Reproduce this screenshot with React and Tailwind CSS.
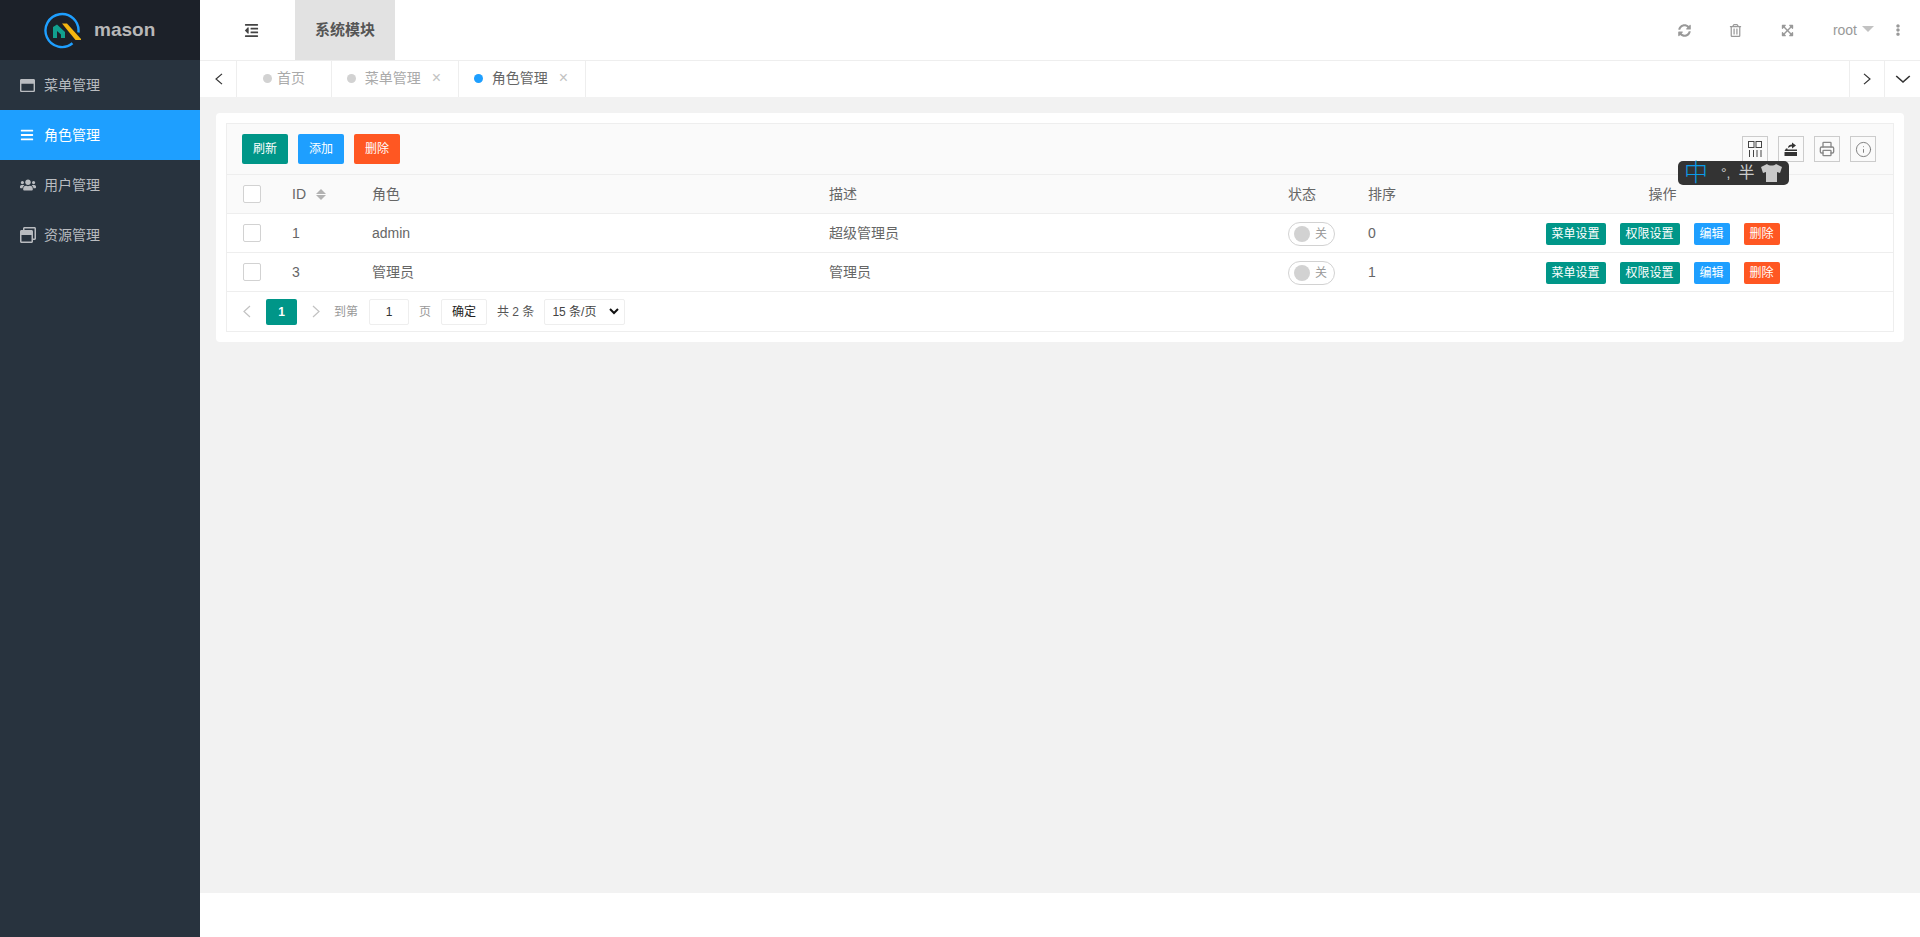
import { FaBars, FaExpandArrowsAlt, FaOutdent, FaRegTrashAlt, FaRegWindowMaximize, FaRegWindowRestore, FaEllipsisV, FaSyncAlt, FaUsers } from 'react-icons/fa'
import { Info, Printer } from 'lucide-react'

const fuente = { fontFamily: '"Liberation Sans", "Noto Sans CJK SC", sans-serif' }

const menu = [
  { nombre: '菜单管理', Icono: FaRegWindowMaximize, tam: 15 },
  { nombre: '角色管理', Icono: FaBars, tam: 14 },
  { nombre: '用户管理', Icono: FaUsers, tam: 16 },
  { nombre: '资源管理', Icono: FaRegWindowRestore, tam: 16 },
]

const filas = [
  { id: 1, rol: 'admin', desc: '超级管理员', orden: 0 },
  { id: 3, rol: '管理员', desc: '管理员', orden: 1 },
]

const columnas = 'grid grid-cols-[50px_80px_457px_459px_80px_79px_1fr] items-center'

function Chevron({ dir = 'left', className = '', alto = 12 }) {
  const puntos = {
    left: '7,1 1,6.5 7,12',
    right: '1,1 7,6.5 1,12',
  }
  return (
    <svg width="8" height={alto} viewBox="0 0 8 13" preserveAspectRatio="none" className={className} fill="none" stroke="currentColor" strokeWidth="1.2">
      <polyline points={puntos[dir]} />
    </svg>
  )
}

function Logo() {
  return (
    <svg width="38" height="38" viewBox="0 0 38 38">
      <path d="M29.5 32.3 A16.5 16.5 0 1 1 35.4 21.5" fill="none" stroke="#1e9fff" strokeWidth="2.4" />
      <path d="M10 27 L10 16 L14 13.5 L22 21 L22 27 L18 27 L18 23.5 L14 20 L14 27 Z" fill="#11a08f" />
      <path d="M19 12.5 L24 12.5 L38 28 L38 29 L32.5 29 Z" fill="#f5b60f" />
    </svg>
  )
}

function Sidebar() {
  return (
    <aside className="w-[200px] shrink-0 bg-[#28333e] flex flex-col">
      <div className="h-[60px] bg-[#1c2129] flex items-center pl-[43px] gap-[13px]">
        <Logo />
        <span className="text-[19px] font-bold text-[#b8b8b8]">mason</span>
      </div>
      {menu.map(({ nombre, Icono, tam }, i) => (
        <div
          key={nombre}
          className={`h-[50px] flex items-center pl-5 text-sm ${i === 1 ? 'bg-[#1e9fff] text-white' : 'text-[#b9bcc0]'}`}
        >
          <span className="w-[24px] flex items-center">
            <Icono size={tam} />
          </span>
          {nombre}
        </div>
      ))}
    </aside>
  )
}

function Topbar() {
  return (
    <header className="h-[60px] shrink-0 bg-white flex items-center">
      <div className="w-[95px] pl-[7px] flex justify-center text-[#444]">
        <FaOutdent size={15} />
      </div>
      <div className="w-[100px] h-full bg-[#e2e2e2] flex items-center justify-center text-[15px] font-bold text-[#555]">
        系统模块
      </div>
      <div className="ml-auto flex items-center text-[#999]">
        <FaSyncAlt size={13} className="mr-[38px]" />
        <FaRegTrashAlt size={13} className="mr-[39px]" />
        <FaExpandArrowsAlt size={13} className="mr-[39px]" />
        <span className="text-sm">root</span>
        <span className="ml-[5px] mr-[18px] border-x-[6px] border-t-[6px] border-x-transparent border-t-[#c2c2c2] mb-[2px]"></span>
        <FaEllipsisV size={12} className="mr-[16px]" />
      </div>
    </header>
  )
}

function Tab({ nombre, activo, cerrar, ancho }) {
  return (
    <div className={`${ancho} h-full pb-[2px] border-r border-[#eee] flex items-center justify-center text-sm ${cerrar ? 'pr-[2px]' : ''} ${activo ? 'text-[#666]' : 'text-[#aaa]'}`}>
      <span className={`w-[9px] h-[9px] rounded-full ${activo ? 'bg-[#1e9fff]' : 'bg-[#d2d2d2]'} ${cerrar ? 'mr-[9px]' : 'mr-[5px]'}`}></span>
      {nombre}
      {cerrar && <span className="ml-[11px] text-[#c2c2c2] text-base leading-none">×</span>}
    </div>
  )
}

function Tabs() {
  return (
    <div className="h-[37px] shrink-0 bg-white border-t border-[#eee] flex items-center">
      <div className="w-[37px] h-full pl-[1px] border-r border-[#eee] flex items-center justify-center text-[#333]">
        <Chevron dir="left" />
      </div>
      <Tab nombre="首页" ancho="w-[95px]" />
      <Tab nombre="菜单管理" ancho="w-[127px]" cerrar />
      <Tab nombre="角色管理" ancho="w-[127px]" activo cerrar />
      <div className="ml-auto w-[36px] h-full border-x border-[#eee] flex items-center justify-center text-[#333]">
        <Chevron dir="right" />
      </div>
      <div className="w-[35px] h-full flex items-center justify-center text-[#333]">
        <Chevron dir="right" alto={16} className="rotate-90" />
      </div>
    </div>
  )
}

function BotonHerramienta({ children }) {
  return (
    <span className="w-[26px] h-[26px] border border-[#ccc] flex items-center justify-center text-[#555]">
      {children}
    </span>
  )
}

function Casilla() {
  return <span className="block ml-4 w-[18px] h-[18px] bg-white border border-[#d2d2d2] rounded-[2px]"></span>
}

function Toolbar() {
  return (
    <div className="h-[51px] bg-[#fafafa] border-b border-[#eee] pl-[15px] pr-[17px] flex items-center gap-[10px]">
      <button className="w-[46px] h-[30px] rounded-[2px] bg-[#009688] text-white text-xs">刷新</button>
      <button className="w-[46px] h-[30px] rounded-[2px] bg-[#1e9fff] text-white text-xs">添加</button>
      <button className="w-[46px] h-[30px] rounded-[2px] bg-[#ff5722] text-white text-xs">删除</button>
      <div className="ml-auto flex gap-[10px]">
        <BotonHerramienta>
          <svg width="14" height="16" viewBox="0 0 14 16" fill="none" stroke="#444">
            <rect x="0.5" y="0.5" width="5.5" height="6" />
            <rect x="8" y="0.5" width="5.5" height="6" />
            <path d="M1.5 9v7M5.5 9v7M9 9v7M13 9v7" />
          </svg>
        </BotonHerramienta>
        <BotonHerramienta>
          <svg width="14" height="14" viewBox="0 0 14 14" fill="#333">
            <path d="M4 6 C4 3.5 6 2.8 8 2.6 L8 0.5 L12 3.5 L8 6.5 L8 4.4 C6.5 4.4 5 5 4 6 Z" />
            <path d="M2 6.5 L3.5 6.5 L3.5 7.5 L13 7.5 L13 9 L0.5 9 Z" />
            <path d="M0.5 10 L13 10 L13 14 L0.5 14 Z" />
          </svg>
        </BotonHerramienta>
        <BotonHerramienta>
          <Printer size={16} strokeWidth={2} className="text-[#888]" />
        </BotonHerramienta>
        <BotonHerramienta>
          <Info size={17} strokeWidth={1.3} className="text-[#777]" />
        </BotonHerramienta>
      </div>
    </div>
  )
}

function Interruptor() {
  return (
    <span className="w-[47px] h-6 mt-[2px] rounded-full border border-[#d2d2d2] bg-white flex items-center pl-[5px] gap-[5px] text-xs text-[#999]">
      <span className="w-4 h-4 rounded-full bg-[#d2d2d2]"></span>
      关
    </span>
  )
}

function Tabla() {
  return (
    <div className="border border-[#eee] text-sm text-[#666]">
      <Toolbar />
      <div className={`${columnas} h-[39px] bg-[#fafafa] border-b border-[#eee]`}>
        <Casilla />
        <div className="pl-[15px] flex items-center gap-[10px]">
          ID
          <span className="flex flex-col gap-[1px]">
            <span className="border-x-[5px] border-b-[5px] border-x-transparent border-b-[#b2b2b2]"></span>
            <span className="border-x-[5px] border-t-[5px] border-x-transparent border-t-[#b2b2b2]"></span>
          </span>
        </div>
        <div className="pl-[15px]">角色</div>
        <div className="pl-[15px]">描述</div>
        <div className="pl-[15px]">状态</div>
        <div className="pl-[15px]">排序</div>
        <div className="text-center">操作</div>
      </div>
      {filas.map((f) => (
        <div key={f.id} className={`${columnas} h-[39px] bg-white border-b border-[#eee]`}>
          <Casilla />
          <div className="pl-[15px]">{f.id}</div>
          <div className="pl-[15px]">{f.rol}</div>
          <div className="pl-[15px]">{f.desc}</div>
          <div className="pl-[15px]"><Interruptor /></div>
          <div className="pl-[15px]">{f.orden}</div>
          <div className="mt-[2px] flex justify-center gap-[14px] text-xs text-white">
            <button className="w-[60px] h-[22px] rounded-[2px] bg-[#009688]">菜单设置</button>
            <button className="w-[60px] h-[22px] rounded-[2px] bg-[#009688]">权限设置</button>
            <button className="w-9 h-[22px] rounded-[2px] bg-[#1e9fff]">编辑</button>
            <button className="w-9 h-[22px] rounded-[2px] bg-[#ff5722]">删除</button>
          </div>
        </div>
      ))}
      <div className="h-[39px] bg-white flex items-center text-xs text-[#999] pl-4">
        <Chevron dir="left" alto={13} className="text-[#c2c2c2]" />
        <span className="ml-[15px] w-[31px] h-[26px] rounded-[2px] bg-[#009688] text-white font-bold flex items-center justify-center">1</span>
        <Chevron dir="right" alto={13} className="ml-[15px] text-[#c2c2c2]" />
        <span className="ml-[14px]">到第</span>
        <span className="ml-[11px] w-10 h-[26px] border border-[#eee] rounded-[2px] flex items-center justify-center text-[#333]">1</span>
        <span className="ml-[10px]">页</span>
        <span className="ml-[10px] w-[46px] h-[26px] border border-[#eee] rounded-[2px] flex items-center justify-center text-[#222]">确定</span>
        <span className="ml-[10px] text-[#555]">共 2 条</span>
        <span className="ml-[10px] w-[81px] h-[26px] border border-[#eee] rounded-[2px] flex items-center pl-[7px] text-[#444]">
          15 条/页
          <svg width="10" height="7" viewBox="0 0 10 7" className="ml-auto mr-[5px]" fill="none" stroke="#111" strokeWidth="2">
            <polyline points="1,1 5,5 9,1" />
          </svg>
        </span>
      </div>
    </div>
  )
}

function BarraIme() {
  return (
    <div className="absolute left-[1678px] top-[161px] w-[111px] h-6 rounded-[5px] bg-[#333] flex items-center pl-[6px] text-[#ccc]">
      <span className="text-[24px] leading-none text-[#0a9be8] font-light">中</span>
      <span className="ml-[13px] text-sm leading-none">°,</span>
      <span className="ml-[8px] text-base leading-none">半</span>
      <svg width="21" height="18" viewBox="0 0 21 18" className="ml-[6px]" fill="#c9c9c9">
        <path d="M6 0 C8 2 13 2 15 0 L21 3 L19 9 L16 8 L16 18 L5 18 L5 8 L2 9 L0 3 Z" />
      </svg>
    </div>
  )
}

export default function App() {
  return (
    <div className="relative h-screen flex overflow-hidden bg-white" style={fuente}>
      <Sidebar />
      <div className="flex-1 min-w-0 flex flex-col">
        <Topbar />
        <Tabs />
        <main className="h-[796px] bg-[#f2f2f2] p-4">
          <div className="bg-white rounded-[4px] p-[10px]">
            <Tabla />
          </div>
        </main>
      </div>
      <BarraIme />
    </div>
  )
}
